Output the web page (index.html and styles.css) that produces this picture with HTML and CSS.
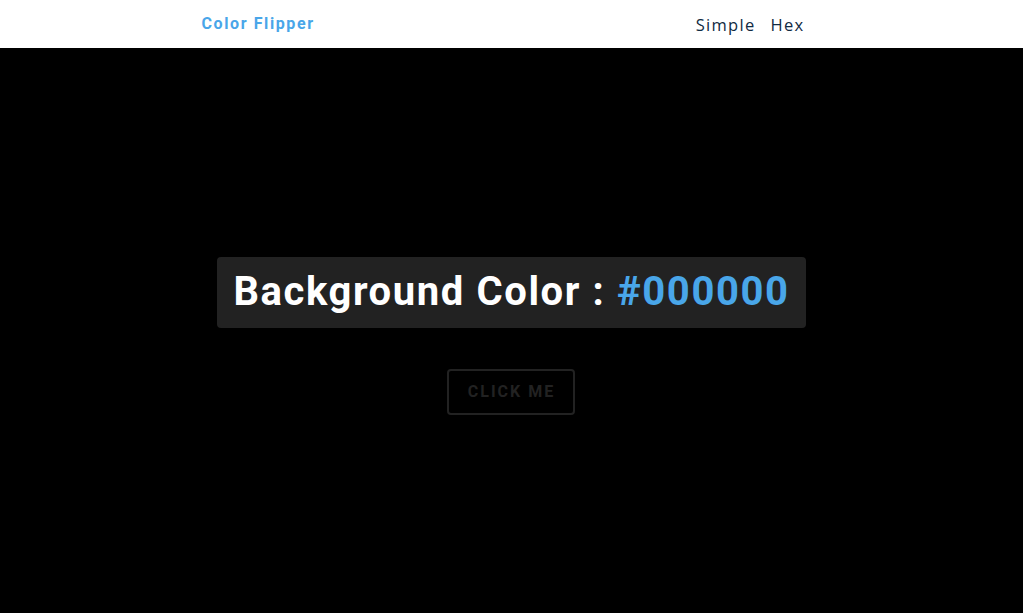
FILE: index.html
```html
<!DOCTYPE html>
<html lang="en">
<head>
<meta charset="utf-8">
<title>Color Flipper</title>
<link rel="stylesheet" href="styles.css">
</head>
<body>
<nav class="nav">
  <div class="nav-center">
    <h4 class="logo">Color Flipper</h4>
    <ul class="nav-links">
      <li><a href="#">Simple</a></li>
      <li><a href="#">Hex</a></li>
    </ul>
  </div>
</nav>
<main class="main">
  <div class="container">
    <h2 class="title">Background Color : <span class="color">#000000</span></h2>
    <button class="btn">click me</button>
  </div>
</main>
</body>
</html>
```

FILE: styles.css
```css
* { margin: 0; padding: 0; box-sizing: border-box; }
html, body { height: 100%; }
body {
  font-family: "Open Sans", sans-serif;
  background: #000;
  color: #102a42;
}
.nav {
  background: #fff;
  height: 48px;
  display: flex;
  align-items: center;
}
.nav-center {
  width: 620px;
  margin: 0 auto;
  display: flex;
  justify-content: space-between;
  align-items: center;
}
.logo {
  font-family: Roboto, sans-serif;
  font-weight: 700;
  font-size: 16px;
  letter-spacing: 1.6px;
  color: #49a6e9;
  margin-top: -2px;
}
.nav-links {
  list-style: none;
  display: flex;
  margin-right: 17px;
}
.nav-links a {
  text-decoration: none;
  font-size: 16.5px;
  letter-spacing: 1.3px;
  color: #102a42;
  margin-left: 15px;
}
.main {
  height: calc(100% - 48px);
  display: flex;
  align-items: center;
  justify-content: center;
}
.container {
  display: flex;
  flex-direction: column;
  align-items: center;
  margin-top: 10px;
}
.title {
  font-family: Roboto, sans-serif;
  font-weight: 700;
  font-size: 40px;
  letter-spacing: 1.6px;
  line-height: 1.25;
  color: #fff;
  background: #222;
  padding: 10px 16px 11px;
  border-radius: 4px;
  margin-bottom: 41px;
}
.color { color: #49a6e9; }
.btn {
  font-family: Roboto, sans-serif;
  font-weight: 700;
  font-size: 16px;
  letter-spacing: 2px;
  text-transform: uppercase;
  color: #222;
  background: transparent;
  border: 2px solid #222;
  border-radius: 4px;
  width: 128px;
  height: 46px;
  cursor: pointer;
}
```
